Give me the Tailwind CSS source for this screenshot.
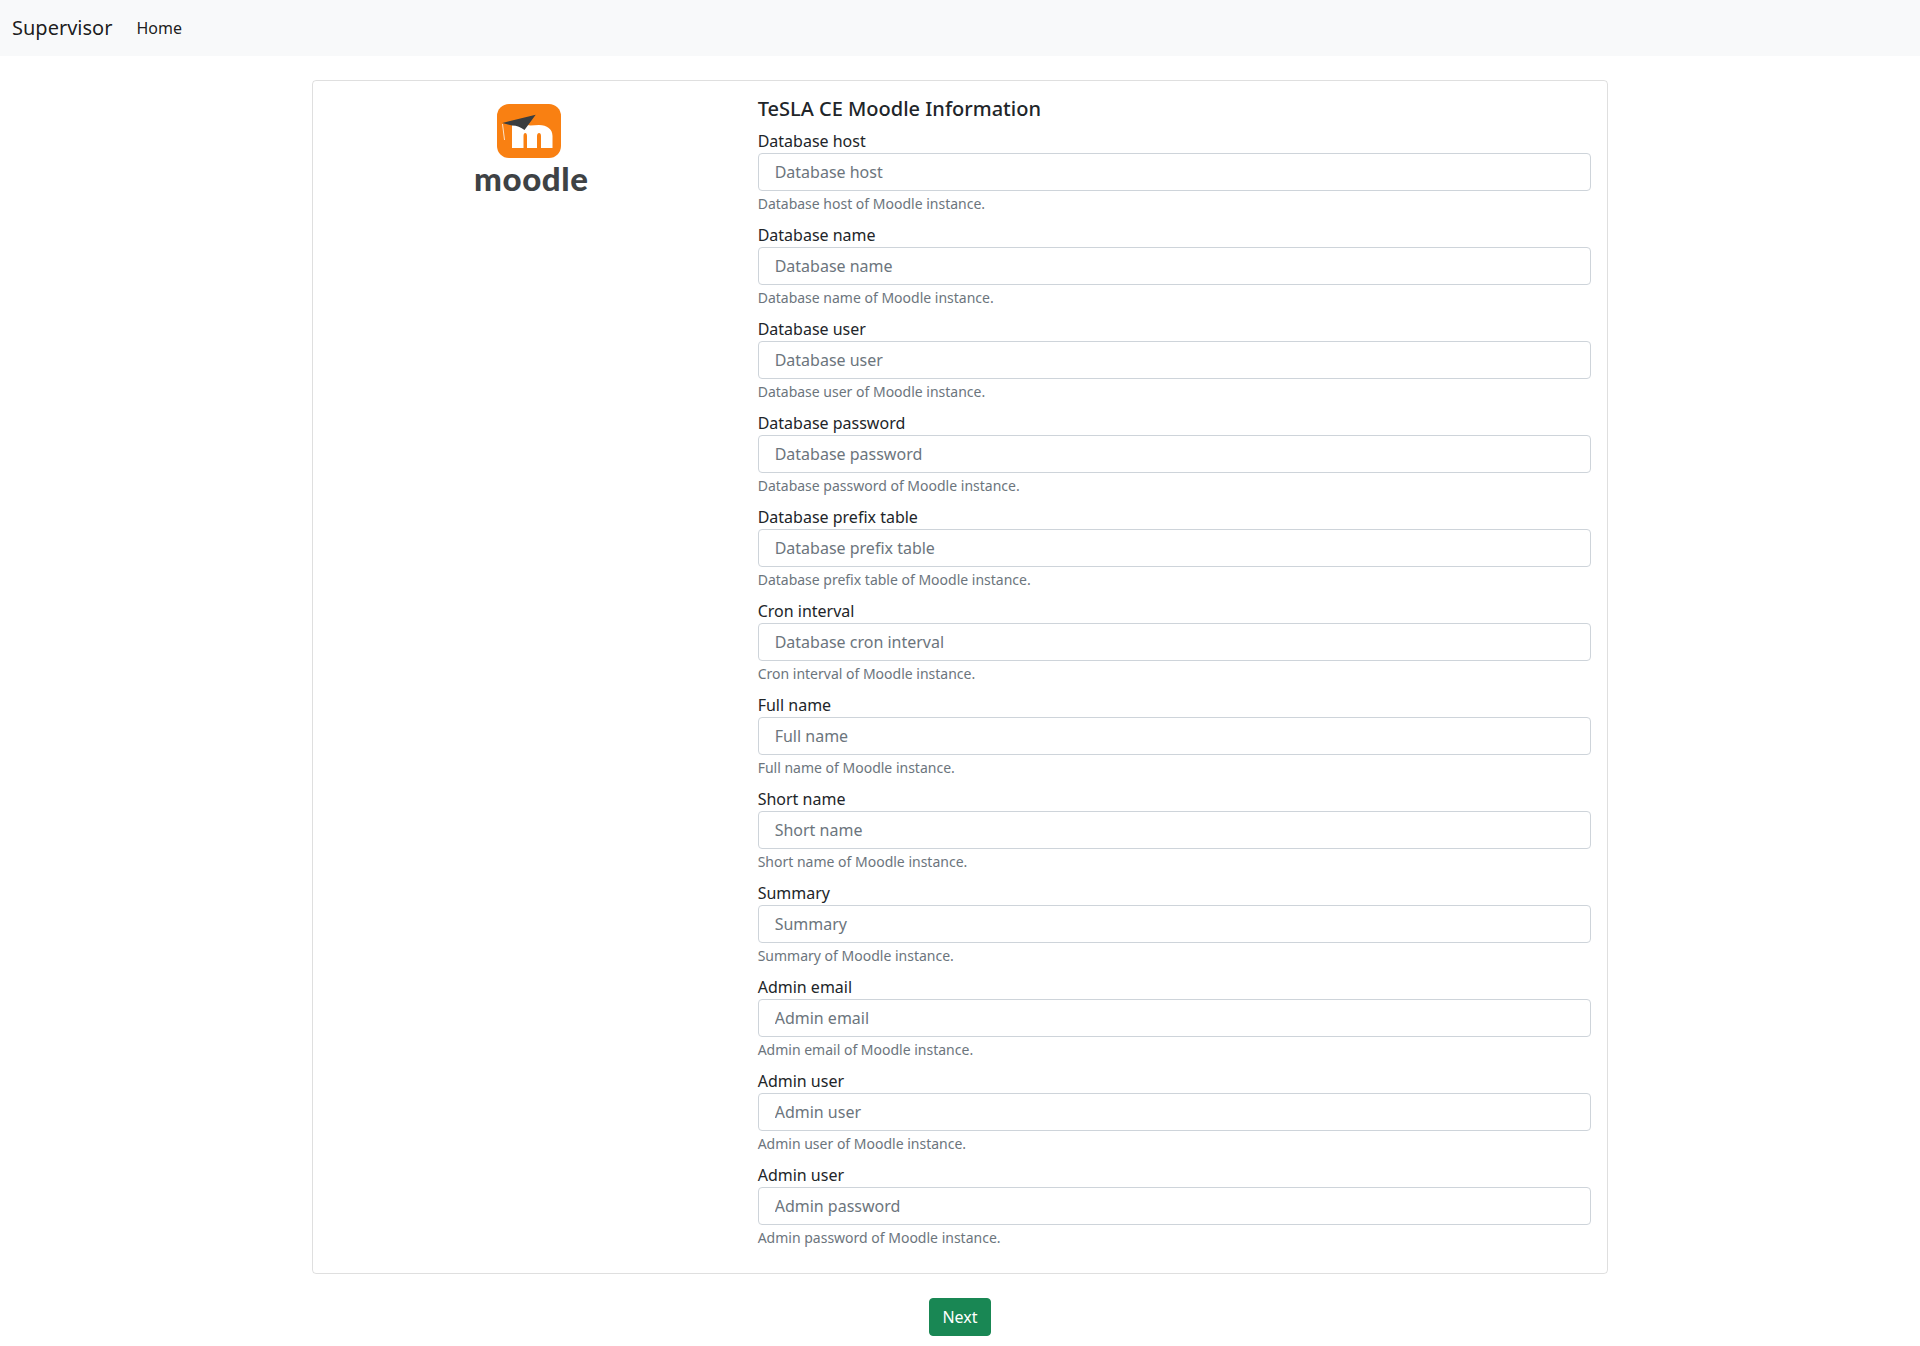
<!DOCTYPE html>
<html lang="en">
<head>
  <meta charset="UTF-8" />
  <title>Supervisor</title>
  <script src="https://cdn.jsdelivr.net/npm/@tailwindcss/browser@4"></script>
</head>
<body class="bg-white text-[#212529] font-['Noto_Sans',sans-serif] text-base leading-6">
  <nav class="h-14 bg-[#f8f9fa] flex items-center pl-3">
    <a href="#" class="text-xl leading-[30px] text-black/90 mr-4">Supervisor</a>
    <a href="#" class="text-black/90 px-2">Home</a>
  </nav>

  <main class="w-[1296px] mx-auto mt-6">
    <div class="border border-black/[.125] rounded p-4 flex h-[1194px]">
      <!-- logo -->
      <div class="w-[404.67px] shrink-0 mr-6 flex flex-col items-center">
        <svg width="64" height="54" viewBox="0 0 64 54" class="mt-[7px] -ml-1 block">
          <rect width="64" height="54" rx="12" fill="#f98012" />
          <path d="M15 44V21H30C33 22 38 21 42 21C50 21 55.500 25 55.500 32V44H44V32C44 30 43.300 29 42 29C41 29 40 30 40 32V44H30V32C30 30 29.300 29 28.250 29C27.200 29 26.500 30 26.500 32V44Z" fill="#fff" />
          <path d="M5.300 19L38.700 10.700 27.500 26C24 23.500 20 21.500 15 21.500L11 20.500Z" fill="#3a3d3f" />
          <path d="M5.500 20L7.500 36" stroke="#fde3c8" stroke-width="1" fill="none" />
        </svg>
        <span class="-mt-px font-['Lato',sans-serif] font-black text-[33px] leading-[42px] tracking-[0.6px] text-[#3e4245]">moodle</span>
      </div>

      <!-- form -->
      <form class="flex-1">
        <h5 class="text-xl leading-6 font-medium mb-2">TeSLA CE Moodle Information</h5>

        <div class="mb-[9px]">
          <label class="block h-6">Database host</label>
          <input type="text" placeholder="Database host" class="block w-full h-[38px] px-4 border border-[#ced4da] rounded placeholder:text-[#6c757d]" />
          <small class="block mt-[2px] text-sm leading-[21px] text-[#6c757d]">Database host of Moodle instance.</small>
        </div>
        <div class="mb-[9px]">
          <label class="block h-6">Database name</label>
          <input type="text" placeholder="Database name" class="block w-full h-[38px] px-4 border border-[#ced4da] rounded placeholder:text-[#6c757d]" />
          <small class="block mt-[2px] text-sm leading-[21px] text-[#6c757d]">Database name of Moodle instance.</small>
        </div>
        <div class="mb-[9px]">
          <label class="block h-6">Database user</label>
          <input type="text" placeholder="Database user" class="block w-full h-[38px] px-4 border border-[#ced4da] rounded placeholder:text-[#6c757d]" />
          <small class="block mt-[2px] text-sm leading-[21px] text-[#6c757d]">Database user of Moodle instance.</small>
        </div>
        <div class="mb-[9px]">
          <label class="block h-6">Database password</label>
          <input type="password" placeholder="Database password" class="block w-full h-[38px] px-4 border border-[#ced4da] rounded placeholder:text-[#6c757d]" />
          <small class="block mt-[2px] text-sm leading-[21px] text-[#6c757d]">Database password of Moodle instance.</small>
        </div>
        <div class="mb-[9px]">
          <label class="block h-6">Database prefix table</label>
          <input type="text" placeholder="Database prefix table" class="block w-full h-[38px] px-4 border border-[#ced4da] rounded placeholder:text-[#6c757d]" />
          <small class="block mt-[2px] text-sm leading-[21px] text-[#6c757d]">Database prefix table of Moodle instance.</small>
        </div>
        <div class="mb-[9px]">
          <label class="block h-6">Cron interval</label>
          <input type="text" placeholder="Database cron interval" class="block w-full h-[38px] px-4 border border-[#ced4da] rounded placeholder:text-[#6c757d]" />
          <small class="block mt-[2px] text-sm leading-[21px] text-[#6c757d]">Cron interval of Moodle instance.</small>
        </div>
        <div class="mb-[9px]">
          <label class="block h-6">Full name</label>
          <input type="text" placeholder="Full name" class="block w-full h-[38px] px-4 border border-[#ced4da] rounded placeholder:text-[#6c757d]" />
          <small class="block mt-[2px] text-sm leading-[21px] text-[#6c757d]">Full name of Moodle instance.</small>
        </div>
        <div class="mb-[9px]">
          <label class="block h-6">Short name</label>
          <input type="text" placeholder="Short name" class="block w-full h-[38px] px-4 border border-[#ced4da] rounded placeholder:text-[#6c757d]" />
          <small class="block mt-[2px] text-sm leading-[21px] text-[#6c757d]">Short name of Moodle instance.</small>
        </div>
        <div class="mb-[9px]">
          <label class="block h-6">Summary</label>
          <input type="text" placeholder="Summary" class="block w-full h-[38px] px-4 border border-[#ced4da] rounded placeholder:text-[#6c757d]" />
          <small class="block mt-[2px] text-sm leading-[21px] text-[#6c757d]">Summary of Moodle instance.</small>
        </div>
        <div class="mb-[9px]">
          <label class="block h-6">Admin email</label>
          <input type="email" placeholder="Admin email" class="block w-full h-[38px] px-4 border border-[#ced4da] rounded placeholder:text-[#6c757d]" />
          <small class="block mt-[2px] text-sm leading-[21px] text-[#6c757d]">Admin email of Moodle instance.</small>
        </div>
        <div class="mb-[9px]">
          <label class="block h-6">Admin user</label>
          <input type="text" placeholder="Admin user" class="block w-full h-[38px] px-4 border border-[#ced4da] rounded placeholder:text-[#6c757d]" />
          <small class="block mt-[2px] text-sm leading-[21px] text-[#6c757d]">Admin user of Moodle instance.</small>
        </div>
        <div>
          <label class="block h-6">Admin user</label>
          <input type="password" placeholder="Admin password" class="block w-full h-[38px] px-4 border border-[#ced4da] rounded placeholder:text-[#6c757d]" />
          <small class="block mt-[2px] text-sm leading-[21px] text-[#6c757d]">Admin password of Moodle instance.</small>
        </div>
      </form>
    </div>

    <div class="flex justify-center mt-6">
      <button class="h-[38px] px-3 bg-[#198754] text-white rounded border border-[#198754]">Next</button>
    </div>
  </main>
</body>
</html>
